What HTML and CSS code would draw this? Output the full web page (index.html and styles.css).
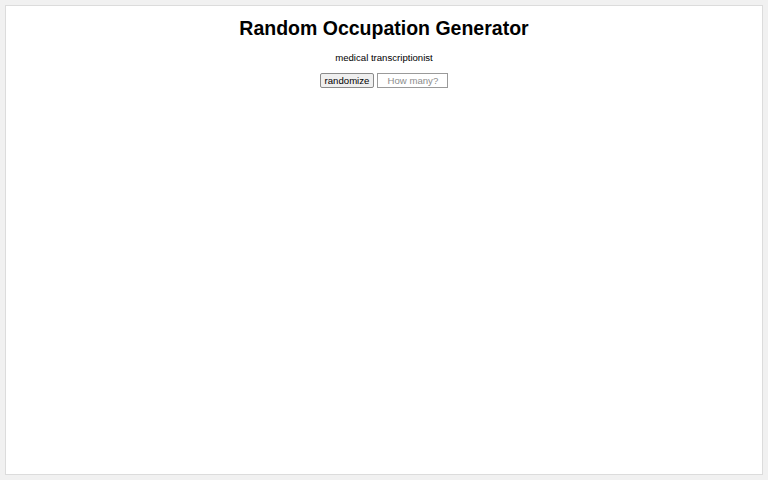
FILE: index.html
```html
<!DOCTYPE html>
<html lang="en">
<head>
  <meta charset="UTF-8">
  <title>Random Occupation Generator</title>
  <link rel="stylesheet" href="styles.css">
</head>
<body>
  <div class="container">
    <h1>Random Occupation Generator</h1>
    <p id="result">medical transcriptionist</p>
    <div class="controls">
      <button id="randomize">randomize</button>
      <input type="text" id="count" placeholder="How many?">
    </div>
  </div>
</body>
</html>
```

FILE: styles.css
```css
body {
  font-family: 'Liberation Sans', Arial, sans-serif;
  background: #f1f1f1;
  margin: 0;
  padding: 5px;
  color: #000;
}

.container {
  background: #fff;
  border: 1px solid #dcdcdc;
  box-sizing: border-box;
  height: 470px;
  text-align: center;
}

h1 {
  font-size: 19.5px;
  margin: 10px 0 0;
  line-height: 24px;
}

#result {
  font-size: 9.6px;
  margin: 12px 0 0;
  line-height: 12px;
}

.controls {
  margin-top: 9px;
  display: flex;
  justify-content: center;
  gap: 3px;
}

button {
  font-family: 'Liberation Sans', Arial, sans-serif;
  font-size: 9.6px;
  padding: 0 4px;
  height: 15px;
  background: #efefef;
  border: 1px solid #8a8a8a;
  border-radius: 2px;
  color: #000;
}

input {
  font-family: 'Liberation Sans', Arial, sans-serif;
  font-size: 9.6px;
  width: 71px;
  height: 15px;
  box-sizing: border-box;
  border: 1px solid #9a9a9a;
  padding: 0 2px;
  text-align: center;
}

input::placeholder {
  color: #8c8c8c;
}
```
